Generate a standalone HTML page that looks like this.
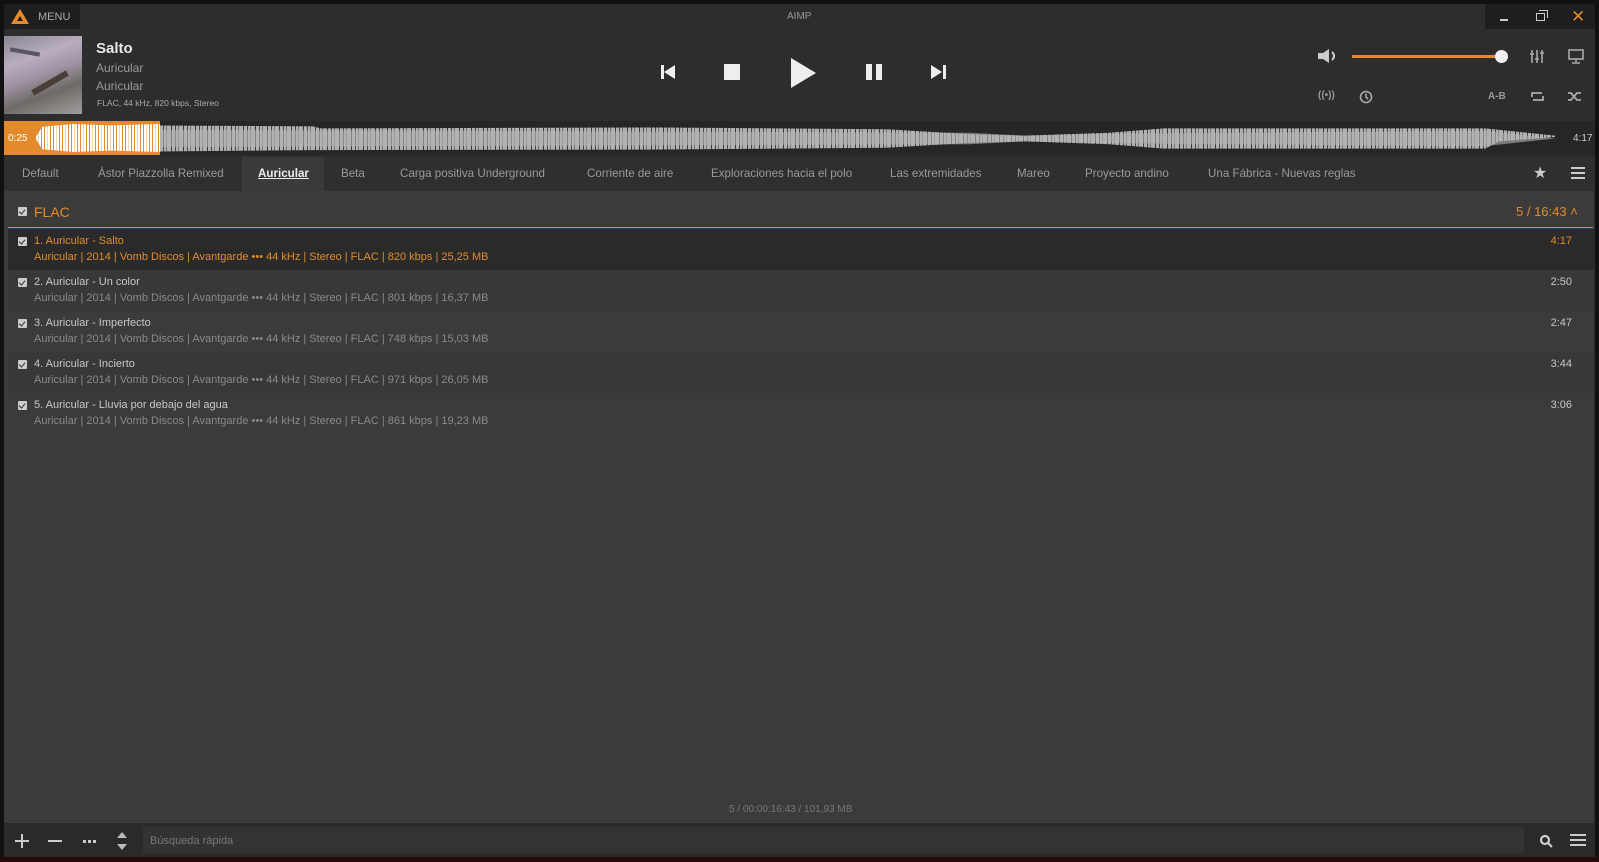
<!DOCTYPE html>
<html><head><meta charset="utf-8"><style>
*{margin:0;padding:0;box-sizing:border-box}
body{width:1599px;height:862px;background:#111;font-family:"Liberation Sans",sans-serif;position:relative;overflow:hidden;color:#aaa}
.a{position:absolute}
.t{position:absolute;white-space:nowrap}
.tab{position:absolute;top:157px;height:34px;line-height:34px;font-size:11.6px;color:#9a9a9a}
.row{position:absolute;left:8px;width:1586px;height:41px}
.cb{position:absolute;left:10px;width:9px;height:9px;background:#ccc;border-radius:1px}
.cb:after{content:"";position:absolute;left:2px;top:1px;width:3px;height:5px;border:solid #333;border-width:0 1.5px 1.5px 0;transform:rotate(40deg)}
.l1{position:absolute;left:26px;top:6px;font-size:11px;color:#c8c8c8}
.l2{position:absolute;left:26px;top:22px;font-size:11px;color:#8a8a8a}
.dur{position:absolute;right:22px;top:6px;font-size:11px;color:#c8c8c8}
</style></head><body>
<div class="a" style="left:4px;top:4px;width:1591px;height:853px;background:#2d2d2d"></div>
<div class="a" style="left:4px;top:4px;width:76px;height:25px;background:#1e1e1e"></div>
<svg class="a" style="left:11px;top:9px" width="18" height="15"><polygon points="9,0 18,15 0,15" fill="#e38b2c"/><polygon points="9,7 12,12 6,12" fill="#1e1e1e"/></svg>
<div class="t" style="left:38px;top:11px;font-size:11px;color:#aaa">MENU</div>
<div class="t" style="left:787px;top:11px;font-size:10px;color:#999">AIMP</div>
<div class="a" style="left:1485px;top:4px;width:110px;height:25px;background:#1e1e1e"></div>
<div class="a" style="left:1500px;top:19px;width:8px;height:2px;background:#ccc"></div>
<div class="a" style="left:1536px;top:13px;width:9px;height:8px;border:1.5px solid #ccc"></div>
<div class="a" style="left:1539px;top:10px;width:9px;height:8px;border-top:1.5px solid #ccc;border-right:1.5px solid #ccc"></div>
<div class="t" style="left:1571px;top:7px;font-size:17px;color:#e38b2c">✕</div>
<div class="a" style="left:4px;top:36px;width:78px;height:78px;background:linear-gradient(160deg,#8a8590 0%,#b8aec0 30%,#9d92a2 50%,#6e6a66 70%,#a49c9e 100%)"></div>
<div class="a" style="left:30px;top:80px;width:40px;height:6px;background:#4a3f38;transform:rotate(-30deg)"></div>
<div class="a" style="left:10px;top:50px;width:30px;height:4px;background:#5a5560;transform:rotate(10deg)"></div>
<div class="t" style="left:96px;top:40px;font-size:15px;font-weight:bold;color:#e8e8e8">Salto</div>
<div class="t" style="left:96px;top:61px;font-size:12px;color:#9a9a9a">Auricular</div>
<div class="t" style="left:96px;top:79px;font-size:12px;color:#9a9a9a">Auricular</div>
<div class="t" style="left:97px;top:98px;font-size:8.5px;color:#aaa">FLAC, 44 kHz, 820 kbps, Stereo</div>
<svg class="a" style="left:660px;top:64px" width="18" height="16"><rect x="1" y="1" width="3" height="14" fill="#eee"/><polygon points="15,1 15,15 4,8" fill="#eee"/></svg>
<div class="a" style="left:724px;top:64px;width:16px;height:16px;background:#eee"></div>
<svg class="a" style="left:790px;top:57px" width="28" height="32"><polygon points="1,1 26,16 1,31" fill="#eee"/></svg>
<div class="a" style="left:866px;top:64px;width:6px;height:16px;background:#eee"></div>
<div class="a" style="left:876px;top:64px;width:6px;height:16px;background:#eee"></div>
<svg class="a" style="left:930px;top:64px" width="18" height="16"><polygon points="1,1 12,8 1,15" fill="#eee"/><rect x="13" y="1" width="3" height="14" fill="#eee"/></svg>
<svg class="a" style="left:1317px;top:48px" width="20" height="16"><polygon points="1,5 6,5 12,1 12,15 6,11 1,11" fill="#ccc"/><path d="M15 4 Q19 8 15 12" stroke="#ccc" stroke-width="2" fill="none"/></svg>
<div class="a" style="left:1352px;top:55px;width:150px;height:3px;background:#e38b2c"></div>
<div class="a" style="left:1495px;top:50px;width:13px;height:13px;border-radius:50%;background:#f2f2f2"></div>
<svg class="a" style="left:1529px;top:49px" width="16" height="15" stroke="#aaa" stroke-width="1.6"><path d="M3 1V14M8 1V14M13 1V14"/><path d="M1 5H5M6 10H10M11 4H15"/></svg>
<svg class="a" style="left:1568px;top:49px" width="16" height="15" stroke="#aaa" stroke-width="1.6" fill="none"><rect x="1" y="1" width="14" height="9"/><path d="M8 10V13M4 14H12"/></svg>
<div class="t" style="left:1318px;top:90px;font-size:10px;color:#999;font-weight:bold">((•))</div>
<svg class="a" style="left:1359px;top:90px" width="14" height="14" stroke="#aaa" stroke-width="1.6" fill="none"><circle cx="7" cy="7" r="5.5"/><path d="M7 3.5V7L9 9"/></svg>
<div class="t" style="left:1488px;top:91px;font-size:10px;color:#999;font-weight:bold">A-B</div>
<svg class="a" style="left:1530px;top:90px" width="15" height="13" stroke="#aaa" stroke-width="1.8" fill="none"><path d="M2 7V3H12M13 6V10H3"/></svg>
<svg class="a" style="left:1567px;top:90px" width="16" height="13" stroke="#aaa" stroke-width="1.8" fill="none"><path d="M1 3H4L10 10H14M1 10H4L10 3H14"/></svg>
<div class="a" style="left:4px;top:121px;width:1591px;height:34px;background:#262626"></div>
<div class="a" style="left:4px;top:121px;width:156px;height:34px;background:#e38b2c"></div>
<div class="a" style="left:36px;top:124px;width:124px;height:28px;background:repeating-linear-gradient(90deg,#fff 0 2px,#f6d6b0 2px 3px,#fff 3px 5px,#e38b2c 5px 6px,#fff 6px 8px,#e38b2c 8px 9px);clip-path:polygon(0 45%,5% 10%,30% 0,60% 5%,100% 0,100% 100%,60% 95%,30% 100%,5% 90%,0 55%)"></div>
<div class="t" style="left:8px;top:133px;font-size:10px;color:#fff">0:25</div>
<div class="a" style="left:160px;top:124px;width:1395px;height:29px;background:repeating-linear-gradient(90deg,#b0b0b0 0 3px,#4a4a4a 3px 4px,#b0b0b0 4px 6px,#777 6px 7px,#b0b0b0 7px 11px,#3a3a3a 11px 12px);clip-path:polygon(0 5%,11% 8%,11.5% 15%,36% 12%,52% 18%,58% 35%,62% 40%,68% 30%,72% 15%,95% 15%,100% 40%,100% 45%,96% 60%,95% 85%,72% 85%,68% 70%,62% 60%,58% 65%,52% 82%,36% 88%,11% 90%,0 95%)"></div>
<div class="a" style="left:160px;top:129px;width:1395px;height:19px;background:#b4b4b4;opacity:.6;clip-path:polygon(0 5%,58% 20%,62% 35%,68% 25%,95% 10%,100% 50%,95% 90%,68% 75%,62% 65%,58% 80%,0 95%)"></div>
<div class="t" style="left:1573px;top:133px;font-size:10px;color:#ccc">4:17</div>
<div class="a" style="left:4px;top:157px;width:1591px;height:34px;background:#2f2f2f"></div>
<div class="a" style="left:242px;top:157px;width:82px;height:34px;background:#3a3a3a"></div>
<div class="tab" style="left:22px">Default</div>
<div class="tab" style="left:98px">Ástor Piazzolla Remixed</div>
<div class="tab" style="left:258px;color:#eee;font-weight:bold;text-decoration:underline">Auricular</div>
<div class="tab" style="left:341px">Beta</div>
<div class="tab" style="left:400px">Carga positiva Underground</div>
<div class="tab" style="left:587px">Corriente de aire</div>
<div class="tab" style="left:711px">Exploraciones hacia el polo</div>
<div class="tab" style="left:890px">Las extremidades</div>
<div class="tab" style="left:1017px">Mareo</div>
<div class="tab" style="left:1085px">Proyecto andino</div>
<div class="tab" style="left:1208px">Una Fábrica - Nuevas reglas</div>
<div class="t" style="left:1533px;top:163px;font-size:16px;color:#ccc">★</div>
<svg class="a" style="left:1571px;top:167px" width="14" height="12" fill="#ccc"><rect y="0" width="14" height="2"/><rect y="5" width="14" height="2"/><rect y="10" width="14" height="2"/></svg>
<div class="a" style="left:4px;top:191px;width:1590px;height:632px;background:#3b3b3b"></div>
<div class="cb" style="left:18px;top:207px"></div>
<div class="t" style="left:34px;top:204px;font-size:14px;color:#e38b2c">FLAC</div>
<div class="t" style="left:1516px;top:204px;font-size:13px;color:#e38b2c">5 / 16:43 ˄</div>
<div class="a" style="left:8px;top:227px;width:1585px;height:1px;background:#e38b2c"></div>
<div class="row" style="top:229px;background:#2a2a2a"><div class="cb" style="top:8px"></div><div class="l1" style="color:#e38b2c">1. Auricular - Salto</div><div class="l2" style="color:#e38b2c">Auricular | 2014 | Vomb Discos | Avantgarde ••• 44 kHz | Stereo | FLAC | 820 kbps | 25,25 MB</div><div class="dur" style="color:#e38b2c">4:17</div></div>
<div class="row" style="top:270px;background:#383838"><div class="cb" style="top:8px"></div><div class="l1">2. Auricular - Un color</div><div class="l2">Auricular | 2014 | Vomb Discos | Avantgarde ••• 44 kHz | Stereo | FLAC | 801 kbps | 16,37 MB</div><div class="dur">2:50</div></div>
<div class="row" style="top:311px;background:#3b3b3b"><div class="cb" style="top:8px"></div><div class="l1">3. Auricular - Imperfecto</div><div class="l2">Auricular | 2014 | Vomb Discos | Avantgarde ••• 44 kHz | Stereo | FLAC | 748 kbps | 15,03 MB</div><div class="dur">2:47</div></div>
<div class="row" style="top:352px;background:#383838"><div class="cb" style="top:8px"></div><div class="l1">4. Auricular - Incierto</div><div class="l2">Auricular | 2014 | Vomb Discos | Avantgarde ••• 44 kHz | Stereo | FLAC | 971 kbps | 26,05 MB</div><div class="dur">3:44</div></div>
<div class="row" style="top:393px;background:#3b3b3b"><div class="cb" style="top:8px"></div><div class="l1">5. Auricular - Lluvia por debajo del agua</div><div class="l2">Auricular | 2014 | Vomb Discos | Avantgarde ••• 44 kHz | Stereo | FLAC | 861 kbps | 19,23 MB</div><div class="dur">3:06</div></div>
<div class="t" style="left:729px;top:804px;font-size:10px;color:#777">5 / 00:00:16:43 / 101,93 MB</div>
<div class="a" style="left:4px;top:823px;width:1591px;height:34px;background:#2a2a2a"></div>
<div class="a" style="left:143px;top:827px;width:1381px;height:26px;background:#333"></div>
<div class="t" style="left:150px;top:835px;font-size:11px;color:#777">Búsqueda rápida</div>
<div class="a" style="left:15px;top:840px;width:14px;height:2px;background:#ccc"></div>
<div class="a" style="left:21px;top:834px;width:2px;height:14px;background:#ccc"></div>
<div class="a" style="left:48px;top:840px;width:14px;height:2px;background:#ccc"></div>
<div class="a" style="left:83px;top:840px;width:3px;height:3px;background:#ccc"></div>
<div class="a" style="left:88px;top:840px;width:3px;height:3px;background:#ccc"></div>
<div class="a" style="left:93px;top:840px;width:3px;height:3px;background:#ccc"></div>
<svg class="a" style="left:117px;top:832px" width="10" height="18" fill="#bbb"><polygon points="5,0 10,6 0,6"/><polygon points="0,12 10,12 5,18"/></svg>
<svg class="a" style="left:1539px;top:834px" width="14" height="14" stroke="#ccc" stroke-width="2.2" fill="none"><circle cx="6" cy="6" r="4"/><path d="M9 9L13 13"/></svg>
<svg class="a" style="left:1570px;top:834px" width="16" height="13" fill="#ccc"><rect y="0" width="16" height="2"/><rect y="5" width="16" height="2"/><rect y="10" width="16" height="2"/></svg>
<div class="a" style="left:0;top:857px;width:1599px;height:5px;background:#2a0a08"></div>
</body></html>
